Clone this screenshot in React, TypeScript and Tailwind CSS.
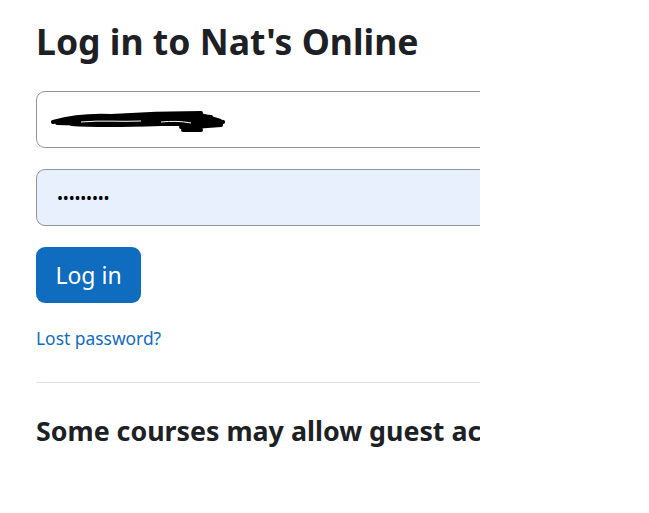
export default function App() {
  return (
    <div className="w-[649px] h-[513px] bg-white overflow-hidden" style={{ fontFamily: '"Noto Sans", "Open Sans", sans-serif' }}>
      <div className="w-[480px] overflow-hidden pl-[36px] pt-[19px]">
        <div className="w-[600px]">
          <h1 className="text-[35.6px] leading-[44px] font-bold text-[#1d2125] whitespace-nowrap">Log in to Nat's Online</h1>
          <div className="mt-[28px] h-[57px] rounded-[9px] border border-[#8f959e] bg-white flex items-center pl-[14px]">
            <svg width="180" height="30" viewBox="0 0 180 30">
              <path d="M2 17 C20 12 40 10 60 11 C90 9 120 8 150 8 M6 18 C40 20 80 16 120 15 C140 14 160 14 172 17 M10 16 C40 14 70 13 100 13 M20 19 C60 22 100 19 140 18 M60 14 C90 12 120 13 165 15 M130 22 C145 22 160 21 170 20 M132 25 L150 25 M100 12 C120 9 140 10 160 12" stroke="#000" strokeWidth="4" fill="none" strokeLinecap="round" />
              <path d="M4 17 L40 12 L80 10 L150 8 L170 14 L172 19 L140 21 L80 21 L30 20 Z" fill="#000" />
              <path d="M30 17 C50 15 70 17 90 16 M110 17 C120 16 130 16 140 18" stroke="#fff" strokeWidth="1" fill="none" />
            </svg>
          </div>
          <div className="mt-[21px] h-[57px] rounded-[9px] border border-[#8f959e] bg-[#e8f0fe] flex items-center pl-[20px]">
            <span className="text-[16px] text-black tracking-[-0.2px]">•••••••••</span>
          </div>
          <button className="mt-[21px] h-[56px] w-[105px] rounded-[9px] bg-[#0f6cbf] text-white text-[23px] flex items-center justify-center">Log in</button>
          <div className="mt-[23px]">
            <a className="text-[17.4px] text-[#0f6cbf] leading-[24px]">Lost password?</a>
          </div>
          <div className="mt-[31px] h-px bg-[#dee2e6]" />
          <h2 className="mt-[31px] text-[26.8px] leading-[34px] font-bold text-[#1d2125] whitespace-nowrap">Some courses may allow guest access</h2>
        </div>
      </div>
    </div>
  );
}
